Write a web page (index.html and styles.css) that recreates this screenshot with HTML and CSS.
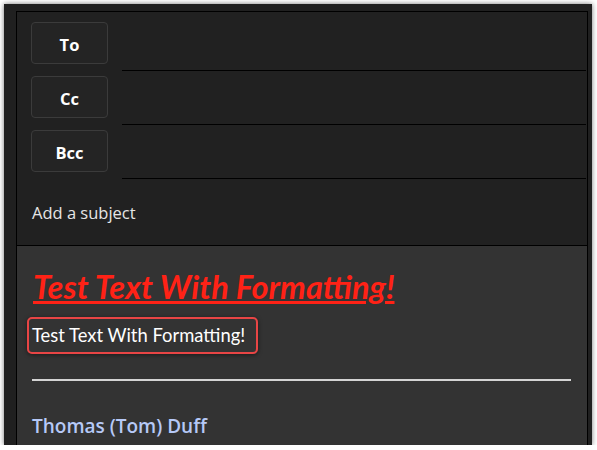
FILE: index.html
```html
<!DOCTYPE html>
<html lang="en">
<head>
    <meta charset="UTF-8">
    <title>New message</title>
    <link rel="stylesheet" href="styles.css">
</head>
<body>
    <!-- Janela do editor de e-mail -->
    <div class="window">
        <div class="compose">
            <!-- Destinatarios e assunto -->
            <div class="header">
                <div class="row first">
                    <button class="recipient">To</button>
                    <div class="field"></div>
                </div>
                <div class="row">
                    <button class="recipient">Cc</button>
                    <div class="field"></div>
                </div>
                <div class="row">
                    <button class="recipient">Bcc</button>
                    <div class="field"></div>
                </div>
                <div class="subject">Add a subject</div>
            </div>

            <!-- Corpo da mensagem -->
            <div class="message">
                <h1 class="title">Test Text With Formatting!</h1>
                <div class="selected">Test Text With Formatting!</div>
                <hr class="divider">
                <div class="signature">Thomas (Tom) Duff</div>
            </div>
        </div>
    </div>
</body>
</html>
```

FILE: styles.css
```css
* {
    margin: 0;
    padding: 0;
    box-sizing: border-box;
}

body {
    background: #ffffff;
    font-family: "Open Sans", "Noto Sans", sans-serif;
    overflow: hidden;
}

/* Moldura da janela */
.window {
    width: 588px;
    height: 441px;
    margin: 4px 0 0 4px;
    padding: 7px 4px 0 12px;
    background: #202020;
    box-shadow: 0 0 5px rgba(0, 0, 0, 0.55);
}

.compose {
    height: 100%;
    border: 1px solid #000;
    border-bottom: none;
    display: flex;
    flex-direction: column;
    overflow: hidden;
}

/* Cabecalho */
.header {
    background: #212121;
    border-bottom: 1px solid #000;
}

.row {
    display: flex;
    padding: 5px 0 0 14px;
}

.row.first {
    padding-top: 10px;
}

.recipient {
    width: 77px;
    height: 42px;
    margin-bottom: 7px;
    padding-top: 2px;
    background: #242424;
    border: 1px solid #3b3b3b;
    border-radius: 4px;
    color: #ffffff;
    font-family: "Open Sans", sans-serif;
    font-size: 16.5px;
    font-weight: 700;
}

.field {
    flex: 1;
    margin: 0 1px 0 14px;
    border-bottom: 1px solid #000;
}

.subject {
    height: 66px;
    padding-left: 15px;
    display: flex;
    align-items: center;
    color: #e6e6e6;
    font-size: 16.5px;
}

/* Corpo */
.message {
    flex: 1;
    background: #333333;
    padding: 24px 15px 0 15px;
}

.title {
    color: #ff2216;
    font-family: Lato, sans-serif;
    font-size: 32.5px;
    font-weight: 700;
    font-style: italic;
    text-decoration: underline;
    text-decoration-thickness: 3px;
    line-height: 34px;
    padding-left: 1px;
}

.selected {
    display: inline-block;
    margin: 13px 0 0 -5px;
    padding: 5px 11px 6px 3px;
    border: 2px solid #e84545;
    border-radius: 5px;
    box-shadow: 0 1px 4px rgba(0, 0, 0, 0.5);
    color: #ffffff;
    font-family: Lato, sans-serif;
    font-size: 18.4px;
    line-height: 22px;
}

.divider {
    margin: 25px 0 0 0;
    width: 539px;
    border: none;
    border-top: 2px solid #d4d4d4;
}

.signature {
    margin-top: 32px;
    color: #b6c9f7;
    font-size: 19px;
    font-weight: 600;
}
```
